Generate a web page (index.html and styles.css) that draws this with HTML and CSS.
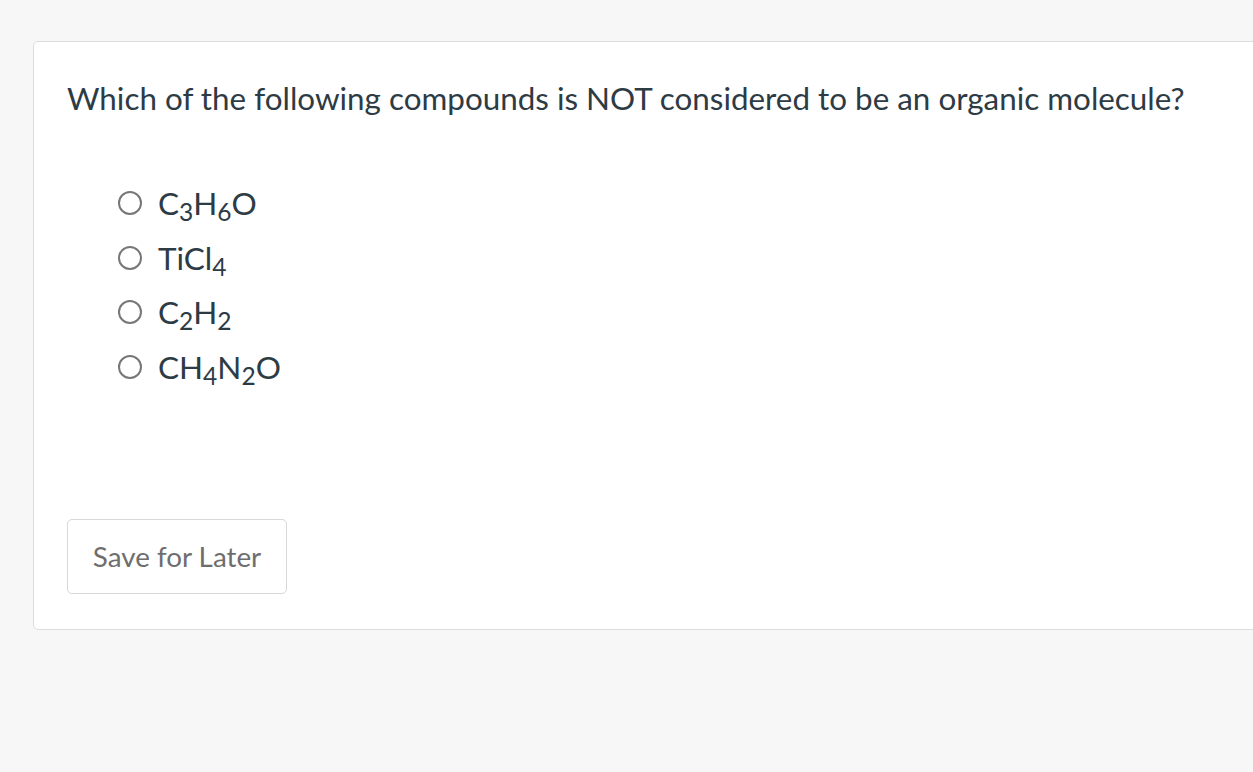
FILE: index.html
```html
<!DOCTYPE html>
<html>
<head>
<meta charset="utf-8">
<link rel="stylesheet" href="styles.css">
</head>
<body>
<div class="card">
  <p class="question">Which of the following compounds is NOT considered to be an organic molecule?</p>
  <ul class="answers">
    <li class="answer"><span class="radio"></span><span class="label">C<sub>3</sub>H<sub>6</sub>O</span></li>
    <li class="answer"><span class="radio"></span><span class="label">TiCl<sub>4</sub></span></li>
    <li class="answer"><span class="radio"></span><span class="label">C<sub>2</sub>H<sub>2</sub></span></li>
    <li class="answer"><span class="radio"></span><span class="label">CH<sub>4</sub>N<sub>2</sub>O</span></li>
  </ul>
  <button class="save">Save for Later</button>
</div>
</body>
</html>
```
FILE: styles.css
```css
html, body {
  margin: 0;
  padding: 0;
  background: #f7f7f7;
  font-family: Lato, "Open Sans", sans-serif;
  color: #2d3b45;
  overflow: hidden;
}
.card {
  margin: 41px 0 0 33px;
  width: 1300px;
  height: 587px;
  box-sizing: content-box;
  background: #fff;
  border: 1px solid #dcdcdc;
  border-radius: 5px;
  padding: 0 0 0 33px;
  display: flex;
  flex-direction: column;
  align-items: flex-start;
}
.question {
  margin: 36px 0 0 0;
  font-size: 31.4px;
  line-height: 40px;
  white-space: nowrap;
}
.answers {
  list-style: none;
  margin: 67px 0 0 51px;
  padding: 0;
  display: flex;
  flex-direction: column;
  gap: 18.5px;
}
.answer {
  display: flex;
  align-items: center;
  height: 36px;
}
.radio {
  width: 24px;
  height: 24px;
  border: 2px solid #777;
  border-radius: 50%;
  box-sizing: border-box;
  margin-right: 16px;
}
.label {
  font-size: 31.5px;
  line-height: 36px;
}
.label sub {
  font-size: 0.78em;
  line-height: 0;
  vertical-align: -0.24em;
}
.save {
  margin-top: 134px;
  width: 220px;
  height: 75px;
  background: #fff;
  border: 1.5px solid #d8d8d8;
  border-radius: 5px;
  font-family: Lato, "Open Sans", sans-serif;
  font-size: 27.8px;
  color: #6e6e6e;
  padding: 0;
}
```
